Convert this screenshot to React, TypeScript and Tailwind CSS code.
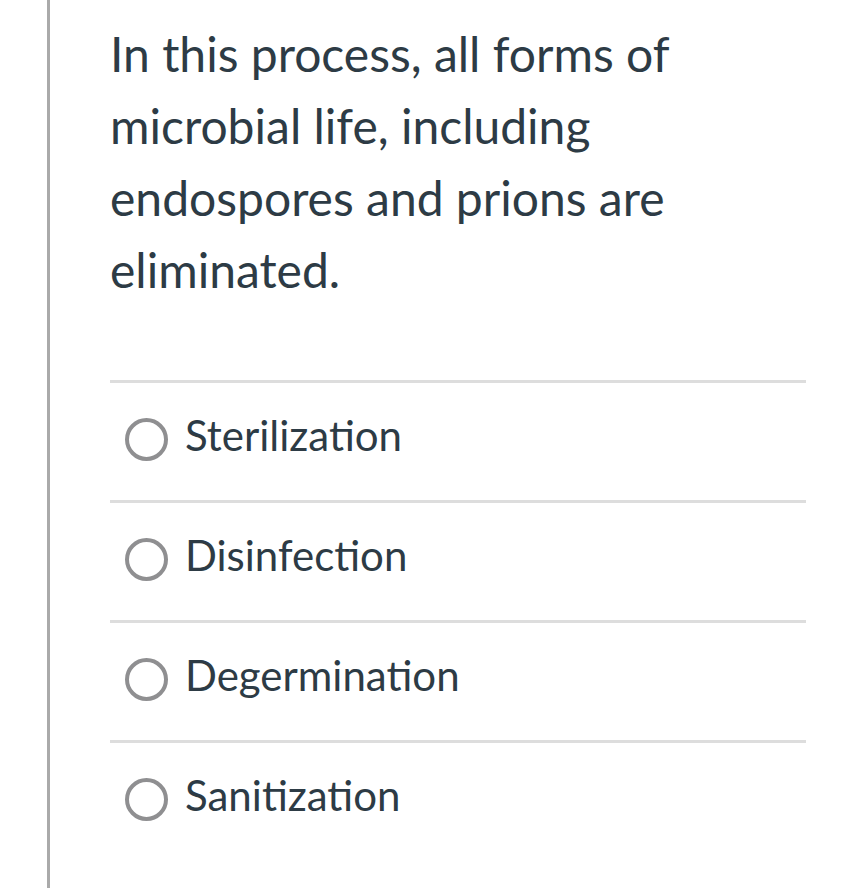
import React from 'react';

const options = ['Sterilization', 'Disinfection', 'Degermination', 'Sanitization'];

export default function App() {
  return (
    <div className="min-h-screen bg-white" style={{ fontFamily: 'Lato, "Noto Sans", sans-serif' }}>
      <div className="ml-[47px] min-h-[888px] border-l-[3px] border-[#aaaaaa] pl-[60px] pr-[50px] text-[#2d3b45]">
        <p className="pt-[18px] text-[48px] leading-[72px]">
          In this process, all forms of microbial life, including endospores and prions are eliminated.
        </p>
        <div className="mt-[74px]">
          {options.map((opt) => (
            <div key={opt} className="border-t-[3px] border-[#dddddd] pt-[22px] pb-[35px]">
              <label className="flex items-start gap-[17px] pl-[15px]">
                <span className="mt-[13px] h-[43px] w-[43px] shrink-0 rounded-full border-4 border-[#8f8f91]" />
                <span className="text-[42px] leading-[60px]">{opt}</span>
              </label>
            </div>
          ))}
        </div>
      </div>
    </div>
  );
}
